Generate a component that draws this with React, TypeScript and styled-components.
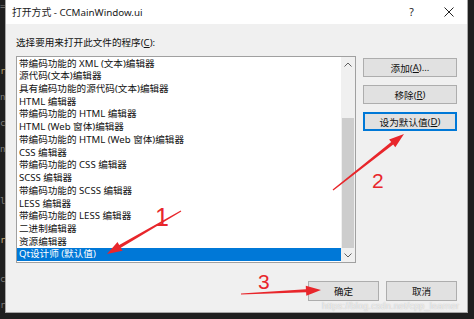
import React from "react";
import styled, { createGlobalStyle } from "styled-components";

const Global = createGlobalStyle`
  html, body { margin: 0; padding: 0; background: #1e1e1e; }
  body {
    width: 474px; height: 319px; overflow: hidden;
    font-family: "Noto Sans", "Noto Sans CJK SC", sans-serif;
  }
  #root { width: 474px; height: 319px; }
`;

const Page = styled.div`
  position: relative;
  width: 474px;
  height: 319px;
  display: flex;
  align-items: flex-start;
  background: #1f1f1f;
  overflow: hidden;
`;

const CodeStrip = styled.div`
  width: 5px;
  height: 319px;
  flex-shrink: 0;
  overflow: hidden;
  display: flex;
  flex-direction: column;
  font: 9px/13px "DejaVu Sans Mono", monospace;
  color: #7c7c7c;
  white-space: pre;
`;

const CodeLine = styled.span<{ $c?: string }>`
  height: 13px;
  color: ${(p) => p.$c || "#7c7c7c"};
`;

const Dialog = styled.div`
  width: 463px;
  height: 313px;
  flex-shrink: 0;
  box-sizing: border-box;
  border: 1px solid #a6a6a6;
  border-top: none;
  background: #f0f0f0;
  display: flex;
  flex-direction: column;
`;

const TitleBar = styled.div`
  height: 24px;
  background: #ffffff;
  display: flex;
  align-items: center;
  flex-shrink: 0;
`;

const TitleText = styled.div`
  flex: 1;
  padding-left: 6px;
  font-size: 9.8px;
  color: #1a1a1a;
  white-space: nowrap;
`;

const TitleButton = styled.div`
  width: 37px;
  height: 24px;
  display: flex;
  align-items: center;
  justify-content: center;
  font: 10.5px "Noto Sans", sans-serif;
  color: #222;
`;

const Body = styled.div`
  flex: 1;
  display: flex;
  flex-direction: column;
  padding: 13px 10px 11px;
`;

const Label = styled.div`
  height: 12px;
  font-size: 9.6px;
  line-height: 12px;
  color: #111;
  white-space: nowrap;
`;

const MainRow = styled.div`
  margin-top: 7px;
  height: 207px;
  display: flex;
  gap: 7px;
`;

const ListBox = styled.div`
  width: 340px;
  height: 207px;
  box-sizing: border-box;
  border: 1px solid #a0a0a0;
  background: #ffffff;
  display: flex;
`;

const Items = styled.div`
  flex: 1;
  padding-top: 0.6px;
  overflow: hidden;
`;

const Item = styled.div<{ $selected?: boolean }>`
  height: 12.73px;
  line-height: 12.73px;
  padding-left: 2px;
  font-size: 9.6px;
  white-space: nowrap;
  color: ${(p) => (p.$selected ? "#ffffff" : "#111")};
  background: ${(p) => (p.$selected ? "#0078d7" : "transparent")};
`;

const ScrollBar = styled.div`
  width: 14px;
  background: #f0f0f0;
  display: flex;
  flex-direction: column;
`;

const ScrollArrow = styled.div`
  height: 14px;
  display: flex;
  align-items: center;
  justify-content: center;
  flex-shrink: 0;
`;

const Track = styled.div`
  flex: 1;
  display: flex;
  flex-direction: column;
  padding: 0 1px;
`;

const Thumb = styled.div`
  margin-top: auto;
  height: 130px;
  background: #cdcdcd;
`;

const SideButtons = styled.div`
  width: 94px;
  padding-top: 2px;
  display: flex;
  flex-direction: column;
  gap: 8px;
`;

const Button = styled.div<{ $focused?: boolean; $w?: number; $h?: number }>`
  width: ${(p) => (p.$w ? `${p.$w}px` : "100%")};
  height: ${(p) => p.$h || 19}px;
  box-sizing: border-box;
  border: ${(p) => (p.$focused ? "2px solid #0078d7" : "1px solid #adadad")};
  background: #e1e1e1;
  display: flex;
  align-items: center;
  justify-content: center;
  font-size: 9.6px;
  color: #111;
  white-space: nowrap;
`;

const Footer = styled.div`
  margin-top: 18px;
  display: flex;
  justify-content: flex-end;
  gap: 7px;
`;

const Overlay = styled.svg`
  position: absolute;
  left: 0;
  top: 0;
  pointer-events: none;
`;

const Watermark = styled.div`
  position: absolute;
  left: 322px;
  top: 300px;
  font: 9px/12px "Liberation Sans", sans-serif;
  color: rgba(255, 255, 255, 0.75);
  text-shadow: 0 0 1px rgba(120, 120, 120, 0.6);
  letter-spacing: 0.2px;
  white-space: nowrap;
`;

const items = [
  "带编码功能的 XML (文本)编辑器",
  "源代码(文本)编辑器",
  "具有编码功能的源代码(文本)编辑器",
  "HTML 编辑器",
  "带编码功能的 HTML 编辑器",
  "HTML (Web 窗体)编辑器",
  "带编码功能的 HTML (Web 窗体)编辑器",
  "CSS 编辑器",
  "带编码功能的 CSS 编辑器",
  "SCSS 编辑器",
  "带编码功能的 SCSS 编辑器",
  "LESS 编辑器",
  "带编码功能的 LESS 编辑器",
  "二进制编辑器",
  "资源编辑器",
  "Qt设计师 (默认值)",
];

function arrowPoints(
  x1: number, y1: number, x2: number, y2: number,
  tailW = 1.3, neckW = 3.2, headW = 10, headL = 15
) {
  const dx = x2 - x1, dy = y2 - y1;
  const L = Math.hypot(dx, dy);
  const ux = dx / L, uy = dy / L;
  const nx = -uy, ny = ux;
  const bx = x2 - ux * headL, by = y2 - uy * headL;
  const pts = [
    [x1 + (nx * tailW) / 2, y1 + (ny * tailW) / 2],
    [bx + (nx * neckW) / 2, by + (ny * neckW) / 2],
    [bx + (nx * headW) / 2, by + (ny * headW) / 2],
    [x2, y2],
    [bx - (nx * headW) / 2, by - (ny * headW) / 2],
    [bx - (nx * neckW) / 2, by - (ny * neckW) / 2],
    [x1 - (nx * tailW) / 2, y1 - (ny * tailW) / 2],
  ];
  return pts.map((p) => `${p[0].toFixed(1)},${p[1].toFixed(1)}`).join(" ");
}

const RED = "#e8262b";

export default function App() {
  return (
    <>
      <Global />
      <Page>
        <CodeStrip>
          <CodeLine>=</CodeLine>
          <CodeLine> </CodeLine>
          <CodeLine> </CodeLine>
          <CodeLine> </CodeLine>
          <CodeLine> </CodeLine>
          <CodeLine $c="#b5a16a">r</CodeLine>
          <CodeLine> </CodeLine>
          <CodeLine>n</CodeLine>
          <CodeLine> </CodeLine>
          <CodeLine>c</CodeLine>
          <CodeLine> </CodeLine>
          <CodeLine>n</CodeLine>
          <CodeLine> </CodeLine>
          <CodeLine> </CodeLine>
          <CodeLine> </CodeLine>
          <CodeLine>l</CodeLine>
          <CodeLine> </CodeLine>
          <CodeLine> </CodeLine>
          <CodeLine $c="#c9b27a">r</CodeLine>
          <CodeLine> </CodeLine>
          <CodeLine> </CodeLine>
          <CodeLine>c</CodeLine>
          <CodeLine> </CodeLine>
          <CodeLine>r</CodeLine>
        </CodeStrip>
        <Dialog>
          <TitleBar>
            <TitleText>打开方式 - CCMainWindow.ui</TitleText>
            <TitleButton>?</TitleButton>
            <TitleButton>
              <svg width="10" height="10" viewBox="0 0 10 10">
                <path d="M0.5 0.5 L9.5 9.5 M9.5 0.5 L0.5 9.5" stroke="#222" strokeWidth="1" fill="none" />
              </svg>
            </TitleButton>
          </TitleBar>
          <Body>
            <Label>
              选择要用来打开此文件的程序(<u>C</u>):
            </Label>
            <MainRow>
              <ListBox>
                <Items>
                  {items.map((t, i) => (
                    <Item key={t} $selected={i === items.length - 1}>
                      {t}
                    </Item>
                  ))}
                </Items>
                <ScrollBar>
                  <ScrollArrow>
                    <svg width="8" height="5" viewBox="0 0 8 5">
                      <path d="M0.5 4.5 L4 1 L7.5 4.5" stroke="#606060" strokeWidth="1" fill="none" />
                    </svg>
                  </ScrollArrow>
                  <Track>
                    <Thumb />
                  </Track>
                  <ScrollArrow>
                    <svg width="8" height="5" viewBox="0 0 8 5">
                      <path d="M0.5 0.5 L4 4 L7.5 0.5" stroke="#606060" strokeWidth="1" fill="none" />
                    </svg>
                  </ScrollArrow>
                </ScrollBar>
              </ListBox>
              <SideButtons>
                <Button>
                  添加(<u>A</u>)...
                </Button>
                <Button>
                  移除(<u>R</u>)
                </Button>
                <Button $focused>
                  设为默认值(<u>D</u>)
                </Button>
              </SideButtons>
            </MainRow>
            <Footer>
              <Button $w={71} $h={20}>确定</Button>
              <Button $w={71} $h={20}>取消</Button>
            </Footer>
          </Body>
        </Dialog>
        <Overlay width="474" height="319" viewBox="0 0 474 319">
          <polygon points={arrowPoints(181, 211, 107, 254)} fill={RED} />
          <polygon points={arrowPoints(333, 190, 404, 134)} fill={RED} />
          <polygon points={arrowPoints(241, 294, 321, 290)} fill={RED} />
          <text x="155" y="226" fill={RED} fontFamily="'Liberation Sans', sans-serif" fontSize="25">1</text>
          <text x="372" y="188" fill={RED} fontFamily="'Liberation Sans', sans-serif" fontSize="21">2</text>
          <text x="258" y="289" fill={RED} fontFamily="'Liberation Sans', sans-serif" fontSize="21">3</text>
        </Overlay>
        <Watermark>https://blog.csdn.net/cpp_learner</Watermark>
      </Page>
    </>
  );
}
